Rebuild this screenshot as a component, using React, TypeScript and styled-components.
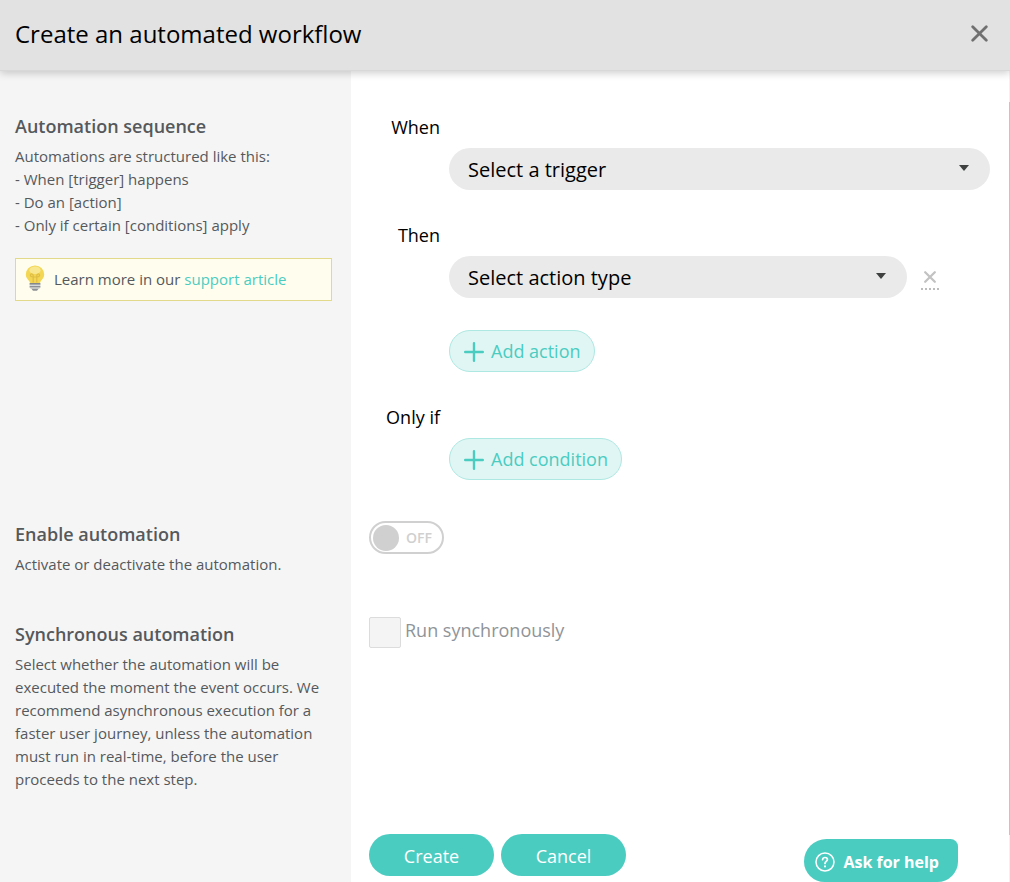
import React, { useState } from "react";
import styled, { createGlobalStyle } from "styled-components";

const teal = "#4bccc1";

const GlobalStyle = createGlobalStyle`
  *, *::before, *::after { box-sizing: border-box; }
  body {
    margin: 0;
    background: #fff;
    color: #000;
    font-family: "Open Sans", "Noto Sans", sans-serif;
    font-size: 18px;
  }
  button, select, input { font: inherit; margin: 0; }
`;

const Dialog = styled.div`
  display: flex;
  flex-direction: column;
  min-height: 100vh;
`;

const Header = styled.header`
  position: relative;
  display: flex;
  align-items: center;
  justify-content: space-between;
  height: 71px;
  padding: 0 22px 3px 15px;
  background: #e2e2e2;
  border-bottom: 1px solid #d8d8d8;
  box-shadow: 0 2px 8px rgba(0, 0, 0, 0.2);
`;

const Title = styled.h1`
  margin: 0;
  font-size: 24px;
  line-height: 32px;
  font-weight: 500;
`;

const IconButton = styled.button`
  display: flex;
  padding: 0;
  border: 0;
  background: none;
  color: #707070;
  cursor: pointer;
`;

const Body = styled.div`
  display: flex;
  flex: 1;
`;

const Form = styled.form`
  display: flex;
  flex-direction: column;
  flex: 1;
  min-width: 0;
`;

const ScrollRail = styled.div`
  width: 1px;
  padding: 31px 0 47px;
  background: #f1f1f1;
  display: flex;
`;

const ScrollThumb = styled.div`
  flex: 1;
  background: #c4c4c4;
`;

const Section = styled.section<{ $min?: number; $grow?: boolean }>`
  display: grid;
  grid-template-columns: 351px minmax(0, 1fr);
  min-height: ${(p) => p.$min ?? 0}px;
  flex: ${(p) => (p.$grow ? "1 0 auto" : "none")};
`;

const Help = styled.div<{ $top: number }>`
  padding: ${(p) => p.$top}px 19px 0 15px;
  background: #f5f5f5;
  color: #55595c;
  font-size: 15px;
  line-height: 23px;
`;

const HelpTitle = styled.h2`
  margin: 0 0 7px;
  font-size: 18px;
  line-height: 24px;
  font-weight: 600;
`;

const HelpText = styled.p`
  margin: 0;
`;

const Tip = styled.div`
  display: flex;
  align-items: center;
  gap: 9px;
  height: 43px;
  margin-top: 21px;
  padding: 0 9px;
  border: 1px solid #e3d98a;
  background: #fffeee;

  & > svg { margin-bottom: 3px; }
`;

const TipLink = styled.a`
  color: ${teal};
  text-decoration: none;
`;

const Fields = styled.div<{ $top: number }>`
  padding: ${(p) => p.$top}px 19px 0 18px;
`;

const Field = styled.div`
  margin-bottom: 26px;
`;

const FieldLabel = styled.label`
  display: block;
  width: 71px;
  padding-bottom: 2px;
  line-height: 38px;
  text-align: right;
  white-space: nowrap;
`;

const FieldBody = styled.div`
  display: flex;
  flex-direction: column;
  align-items: flex-start;
  gap: 32px;
  margin-left: 80px;
`;

const ControlLine = styled.div`
  display: flex;
  align-items: center;
  gap: 14px;
  width: 100%;
`;

const SelectShell = styled.div`
  display: grid;
  align-items: center;
  flex: 1;

  & > * { grid-area: 1 / 1; }
  & > svg {
    justify-self: end;
    margin: 0 21px 3px 0;
    pointer-events: none;
  }
`;

const Select = styled.select`
  appearance: none;
  width: 100%;
  height: 42px;
  padding: 0 48px 0 19px;
  border: 0;
  border-radius: 21px;
  background: #eaeaea;
  color: #000;
  font-size: 20px;
`;

const RemoveButton = styled(IconButton)`
  justify-content: center;
  width: 18px;
  height: 26px;
  margin: 0 51px 0 0;
  padding-top: 7px;
  border-bottom: 2px dotted #bcbcbc;
  color: #c2c2c2;
`;

const AddButton = styled.button`
  display: flex;
  align-items: center;
  gap: 7px;
  height: 42px;
  padding: 0 13px 0 14px;
  border: 1px solid #aee8e2;
  border-radius: 21px;
  background: #e0f6f4;
  color: ${teal};
  cursor: pointer;

  & > svg { margin-top: 2px; }
`;

const Switch = styled.label`
  display: block;
  width: 75px;
  cursor: pointer;
`;

const HiddenInput = styled.input`
  position: absolute;
  opacity: 0;
`;

const SwitchTrack = styled.span<{ $on: boolean }>`
  display: flex;
  flex-direction: ${(p) => (p.$on ? "row-reverse" : "row")};
  align-items: center;
  gap: 7px;
  height: 33px;
  padding: 0 2px;
  border: 2px solid ${(p) => (p.$on ? teal : "#d0d0d0")};
  border-radius: 17px;
  color: ${(p) => (p.$on ? teal : "#d0d0d0")};
  font-size: 14px;
  font-weight: 600;
`;

const SwitchKnob = styled.span`
  width: 26px;
  height: 26px;
  border-radius: 50%;
  background: currentColor;
`;

const CheckLine = styled.div`
  display: flex;
  align-items: center;
  gap: 4px;
  color: #8f9499;

  label { padding-bottom: 5px; }
`;

const CheckBox = styled.input`
  appearance: none;
  width: 32px;
  height: 31px;
  border: 1px solid #dcdcdc;
  border-radius: 2px;
  background: #f4f4f4;

  &:checked { background: ${teal}; }
`;

const Actions = styled.div`
  display: flex;
  gap: 7px;
`;

const PrimaryButton = styled.button`
  width: 125px;
  height: 42px;
  padding: 2px 0 0;
  border: 0;
  border-radius: 21px;
  background: ${teal};
  color: #fff;
  cursor: pointer;
`;

const HelpButton = styled.button`
  position: fixed;
  right: 52px;
  bottom: 0;
  display: flex;
  align-items: center;
  gap: 8px;
  height: 43px;
  padding: 2px 19px 0 11px;
  border: 0;
  border-radius: 24px 8px 22px 22px;
  background: ${teal};
  color: #fff;
  font-size: 16px;
  font-weight: 700;
  cursor: pointer;
`;

const Cross = ({ size, stroke }: { size: number; stroke: number }) => (
  <svg width={size} height={size} viewBox="0 0 16 16" fill="none" stroke="currentColor" strokeWidth={stroke} strokeLinecap="round" aria-hidden="true">
    <path d="M1.600 1.600 14.400 14.400M14.400 1.600 1.600 14.400" />
  </svg>
);

const Caret = () => (
  <svg width="10" height="6" viewBox="0 0 10 6" fill="#3f4141" aria-hidden="true">
    <path d="M0 0h10L5 6z" />
  </svg>
);

const Plus = () => (
  <svg width="20" height="20" viewBox="0 0 20 20" stroke="currentColor" strokeWidth="2.4" strokeLinecap="round" aria-hidden="true">
    <path d="M10 1.200v17.600M1.200 10h17.600" />
  </svg>
);

const Bulb = () => (
  <svg width="20" height="26" viewBox="0 0 20 26" aria-hidden="true">
    <path d="M10 .5a9 9 0 0 1 9.200 9c0 3.300-2 4.700-3.300 6.500-.5.800-.7 1.300-.9 2H5c-.2-.7-.4-1.200-.9-2C2.800 14.200.8 12.800.8 9.500A9 9 0 0 1 10 .5z" fill="#f3d653" />
    <ellipse cx="10" cy="5.200" rx="5.600" ry="3.800" fill="#f9e790" />
    <path d="M8.200 17.500V12M11.800 17.500V12M8.200 12c-3.800.2-3.300-3.400-1.200-3 1.500.3 1.200 3 1.200 3h3.600s-.3-2.700 1.200-3c2.100-.4 2.600 3.200-1.200 3" fill="none" stroke="#dfbd44" strokeWidth="1.200" />
    <path d="M4.600 18h10.800v1.800H4.600z" fill="#85898d" />
    <path d="M4.600 19.800h10.800v1.200H4.600z" fill="#d5d8da" />
    <path d="M4.600 21h10.800v1.600H4.600z" fill="#8d9195" />
    <path d="M5.400 22.600h9.200v1.100H5.400z" fill="#c6c9cb" />
    <path d="M6.400 23.700h7.200l-1.600 2H8z" fill="#8d9195" />
  </svg>
);

const Question = () => (
  <svg width="20" height="20" viewBox="0 0 20 20" fill="none" stroke="currentColor" strokeLinecap="round" strokeLinejoin="round" aria-hidden="true">
    <circle cx="10" cy="10" r="9" strokeWidth="1.500" />
    <path d="M7.600 7.700C7.700 6.300 8.700 5.500 10 5.500s2.400.8 2.400 2c0 1.800-2.400 1.900-2.400 4" strokeWidth="1.700" />
    <path d="M10 14.300v.1" strokeWidth="2" />
  </svg>
);

export default function App() {
  const [enabled, setEnabled] = useState(false);

  return (
    <Dialog>
      <GlobalStyle />
      <Header>
        <Title>Create an automated workflow</Title>
        <IconButton type="button" aria-label="Close">
          <Cross size={17} stroke={2.6} />
        </IconButton>
      </Header>
      <Body>
        <Form onSubmit={(e) => e.preventDefault()}>
          <Section $min={437}>
            <Help $top={43}>
              <HelpTitle>Automation sequence</HelpTitle>
              <HelpText>
                Automations are structured like this:
                <br />- When [trigger] happens
                <br />- Do an [action]
                <br />- Only if certain [conditions] apply
              </HelpText>
              <Tip>
                <Bulb />
                <span>
                  Learn more in our <TipLink href="#support">support article</TipLink>
                </span>
              </Tip>
            </Help>
            <Fields $top={37}>
              <Field>
                <FieldLabel htmlFor="trigger">When</FieldLabel>
                <FieldBody>
                  <ControlLine>
                    <SelectShell>
                      <Select id="trigger">
                        <option>Select a trigger</option>
                      </Select>
                      <Caret />
                    </SelectShell>
                  </ControlLine>
                </FieldBody>
              </Field>
              <Field>
                <FieldLabel htmlFor="action">Then</FieldLabel>
                <FieldBody>
                  <ControlLine>
                    <SelectShell>
                      <Select id="action">
                        <option>Select action type</option>
                      </Select>
                      <Caret />
                    </SelectShell>
                    <RemoveButton type="button" aria-label="Remove action">
                      <Cross size={12} stroke={3} />
                    </RemoveButton>
                  </ControlLine>
                  <AddButton type="button">
                    <Plus />
                    Add action
                  </AddButton>
                </FieldBody>
              </Field>
              <Field>
                <FieldLabel htmlFor="condition">Only if</FieldLabel>
                <FieldBody>
                  <AddButton type="button" id="condition">
                    <Plus />
                    Add condition
                  </AddButton>
                </FieldBody>
              </Field>
            </Fields>
          </Section>
          <Section $min={100}>
            <Help $top={14}>
              <HelpTitle>Enable automation</HelpTitle>
              <HelpText>Activate or deactivate the automation.</HelpText>
            </Help>
            <Fields $top={13}>
              <Switch>
                <HiddenInput
                  type="checkbox"
                  role="switch"
                  aria-label="Enable automation"
                  checked={enabled}
                  onChange={(e) => setEnabled(e.target.checked)}
                />
                <SwitchTrack $on={enabled}>
                  <SwitchKnob />
                  {enabled ? "ON" : "OFF"}
                </SwitchTrack>
              </Switch>
            </Fields>
          </Section>
          <Section $min={202}>
            <Help $top={14}>
              <HelpTitle>Synchronous automation</HelpTitle>
              <HelpText>
                Select whether the automation will be executed the moment the event occurs. We recommend
                asynchronous execution for a faster user journey, unless the automation must run in real-time,
                before the user proceeds to the next step.
              </HelpText>
            </Help>
            <Fields $top={9}>
              <CheckLine>
                <CheckBox type="checkbox" id="sync" />
                <label htmlFor="sync">Run synchronously</label>
              </CheckLine>
            </Fields>
          </Section>
          <Section $grow>
            <Help $top={0} />
            <Fields $top={24}>
              <Actions>
                <PrimaryButton type="submit">Create</PrimaryButton>
                <PrimaryButton type="button">Cancel</PrimaryButton>
              </Actions>
            </Fields>
          </Section>
        </Form>
        <ScrollRail>
          <ScrollThumb />
        </ScrollRail>
      </Body>
      <HelpButton type="button">
        <Question />
        Ask for help
      </HelpButton>
    </Dialog>
  );
}
